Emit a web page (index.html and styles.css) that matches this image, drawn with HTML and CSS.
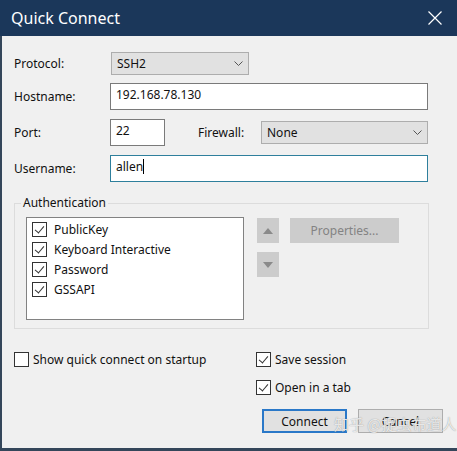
FILE: index.html
```
<!DOCTYPE html>
<html>
<head>
<meta charset="utf-8">
<link rel="stylesheet" href="styles.css">
</head>
<body>
<div class="window">
  <div class="titlebar">
    <span class="title">Quick Connect</span>
    <svg class="close" width="14" height="14" viewBox="0 0 14 14"><path d="M0.5 0.5 L13.5 13.5 M13.5 0.5 L0.5 13.5" stroke="#ffffff" stroke-width="1.2" fill="none"/></svg>
  </div>
  <div class="content">
    <div class="row r1">
      <span class="label">Protocol:</span>
      <div class="select sel-proto"><span>SSH2</span><svg class="chev" width="9" height="5" viewBox="0 0 9 5"><path d="M0.5 0.5 L4.5 4.5 L8.5 0.5" stroke="#555" fill="none"/></svg></div>
    </div>
    <div class="row r2">
      <span class="label">Hostname:</span>
      <div class="input wide">192.168.78.130</div>
    </div>
    <div class="row r3">
      <span class="label">Port:</span>
      <div class="input port">22</div>
      <span class="label fw">Firewall:</span>
      <div class="select sel-fw"><span>None</span><svg class="chev" width="9" height="5" viewBox="0 0 9 5"><path d="M0.5 0.5 L4.5 4.5 L8.5 0.5" stroke="#555" fill="none"/></svg></div>
    </div>
    <div class="row r4">
      <span class="label">Username:</span>
      <div class="input wide focus">allen<span class="caret"></span></div>
    </div>
    <fieldset class="group">
      <legend>Authentication</legend>
      <div class="group-body">
        <div class="listbox">
          <div class="item"><span class="cb checked"></span>PublicKey</div>
          <div class="item"><span class="cb checked"></span>Keyboard Interactive</div>
          <div class="item"><span class="cb checked"></span>Password</div>
          <div class="item"><span class="cb checked"></span>GSSAPI</div>
        </div>
        <div class="arrows">
          <div class="arrow-btn"><svg width="10" height="6" viewBox="0 0 10 6"><path d="M0 6 L5 0 L10 6 Z" fill="#8a8a8a"/></svg></div>
          <div class="arrow-btn"><svg width="10" height="6" viewBox="0 0 10 6"><path d="M0 0 L5 6 L10 0 Z" fill="#8a8a8a"/></svg></div>
        </div>
        <div class="btn disabled">Properties...</div>
      </div>
    </fieldset>
    <div class="bottom">
      <div class="check"><span class="cb"></span>Show quick connect on startup</div>
      <div class="check"><span class="cb checked"></span>Save session</div>
      <div></div>
      <div class="check"><span class="cb checked"></span>Open in a tab</div>
      <div></div>
      <div class="buttons">
        <div class="btn default">Connect</div>
        <div class="btn">Cancel</div>
      </div>
    </div>
  </div>
  <div class="watermark">知乎 @捉虫布道人</div>
</div>
</body>
</html>
```
FILE: styles.css
```
* { box-sizing: border-box; }
html, body { margin: 0; padding: 0; }
body {
  width: 457px;
  height: 451px;
  overflow: hidden;
  background: #f0f0f0;
  font-family: "Noto Sans", "Noto Sans CJK SC", sans-serif;
  font-size: 12px;
  color: #111;
}
.window {
  position: relative;
  width: 457px;
  height: 451px;
  display: flex;
  flex-direction: column;
}
.titlebar {
  height: 36px;
  background: #1b375a;
  display: flex;
  align-items: center;
  justify-content: space-between;
  padding: 0 15px 0 11px;
  color: #ffffff;
}
.title { font-size: 16px; }
.close { display: block; }
.content {
  flex: 1;
  border-left: 2px solid #34465a;
  border-bottom: 3px solid #34465a;
  padding-left: 12px;
}
.row { display: flex; align-items: center; }
.label { width: 96px; }
.r1 { margin-top: 16px; height: 23px; }
.r2 { margin-top: 8px; height: 27px; }
.r3 { margin-top: 9px; height: 27px; }
.r4 { margin-top: 9px; height: 27px; }
.select {
  height: 23px;
  background: #e1e1e1;
  border: 1px solid #adadad;
  display: flex;
  align-items: center;
  justify-content: space-between;
  padding: 0 5px 0 5px;
}
.chev { display: block; }
.sel-proto { width: 138px; margin-left: 1px; }
.sel-fw { width: 167px; }
.fw { margin-left: 33px; width: 63px; }
.input {
  height: 27px;
  background: #ffffff;
  border: 1px solid #7a7a7a;
  padding: 2px 5px 0 5px;
  display: flex;
  align-items: flex-start;
}
.wide { width: 318px; }
.port { width: 55px; }
.focus { border-color: #2e7f9c; }
.caret {
  display: inline-block;
  width: 1px;
  height: 15px;
  background: #000;
  margin-top: 1px;
}
.group {
  margin: 13px 0 0 0;
  padding: 0 0 8px 0;
  width: 415px;
  border: 1px solid #dcdcdc;
  min-width: 0;
}
.group legend {
  margin-left: 6px;
  padding: 0 2px;
  line-height: 16px;
}
.group-body {
  display: flex;
  align-items: flex-start;
  padding-left: 11px;
  margin-top: 6px;
}
.listbox {
  width: 218px;
  height: 103px;
  background: #ffffff;
  border: 1px solid #828282;
  padding: 1px 0 0 5px;
}
.item {
  height: 20px;
  display: flex;
  align-items: center;
}
.item .cb { margin-right: 7px; }
.cb {
  width: 15px;
  height: 15px;
  border: 1px solid #333333;
  background: #ffffff;
  flex: none;
  position: relative;
}
.cb.checked::after {
  content: "";
  position: absolute;
  left: 4px;
  top: 1px;
  width: 4px;
  height: 8px;
  border-right: 1.3px solid #333;
  border-bottom: 1.3px solid #333;
  transform: rotate(40deg);
}
.arrows {
  display: flex;
  flex-direction: column;
  gap: 9px;
  margin-left: 13px;
  margin-top: 1px;
}
.arrow-btn {
  width: 22px;
  height: 25px;
  background: #cccccc;
  display: flex;
  align-items: center;
  justify-content: center;
}
.btn {
  width: 85px;
  height: 24px;
  background: #e1e1e1;
  border: 1px solid #adadad;
  display: flex;
  align-items: center;
  justify-content: center;
}
.btn.disabled {
  width: 109px;
  height: 25px;
  margin-left: 11px;
  margin-top: 1px;
  background: #cccccc;
  border-color: #cccccc;
  color: #838383;
}
.btn.default { border: 2px solid #2a78c8; }
.bottom {
  display: grid;
  grid-template-columns: 242px 1fr;
  row-gap: 12px;
  margin-top: 22px;
}
.check {
  display: flex;
  align-items: center;
  height: 16px;
}
.check .cb { margin-right: 4px; }
.buttons {
  display: flex;
  gap: 11px;
  margin-left: 6px;
  margin-top: 2px;
}
.watermark {
  position: absolute;
  left: 334px;
  top: 413px;
  font-family: "Noto Sans CJK SC", sans-serif;
  font-size: 15px;
  color: rgba(255, 255, 255, 0.8);
  text-shadow: 0 0 1px rgba(110, 110, 110, 0.8);
}
```
